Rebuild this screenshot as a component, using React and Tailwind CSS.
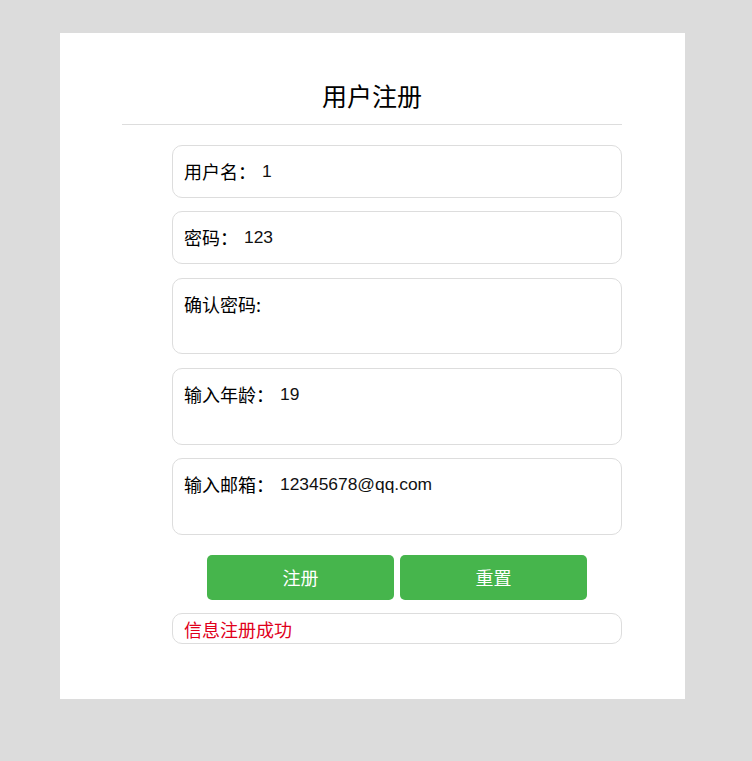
import React from 'react';

const cjk = '"Noto Sans CJK SC", "Liberation Sans", sans-serif';
const latin = '"Liberation Sans", "Noto Sans CJK SC", sans-serif';

const Field = ({ label, value, className }) => (
    <div className={`flex items-start border border-[#dddddd] rounded-[10px] pl-[11px] pt-[15px] ${className}`}>
        <span className="text-[18px] leading-[20px] text-black" style={{ fontFamily: cjk }}>{label}</span>
        {value && (
            <span className="ml-[6px] text-[17.4px] leading-[20px] text-[#111]" style={{ fontFamily: latin }}>{value}</span>
        )}
    </div>
);

const App = () => {
    return (
        <div className="min-h-screen bg-[#dcdcdc] pt-[33px]">
            <div className="ml-[60px] w-[625px] h-[666px] bg-white pl-[62px] pr-[63px] flex flex-col">
                {/* Header */}
                <h1 className="mt-[49px] h-[26px] leading-[26px] text-center text-[25px] text-black" style={{ fontFamily: cjk }}>
                    用户注册
                </h1>
                <div className="mt-[16px] h-px bg-[#dddddd]" />

                {/* Form */}
                <div className="ml-[50px] w-[450px] flex flex-col">
                    <Field label="用户名：" value="1" className="mt-[20px] h-[53px]" />
                    <Field label="密码：" value="123" className="mt-[13px] h-[53px]" />
                    <Field label="确认密码:" className="mt-[14px] h-[76px]" />
                    <Field label="输入年龄：" value="19" className="mt-[14px] h-[77px]" />
                    <Field label="输入邮箱：" value="12345678@qq.com" className="mt-[13px] h-[77px]" />

                    <div className="mt-[20px] flex justify-center gap-[6px]">
                        <button className="w-[187px] h-[45px] rounded-[5px] bg-[#46b54c] text-white text-[18px]" style={{ fontFamily: cjk }}>
                            注册
                        </button>
                        <button className="w-[187px] h-[45px] rounded-[5px] bg-[#46b54c] text-white text-[18px]" style={{ fontFamily: cjk }}>
                            重置
                        </button>
                    </div>

                    <div className="mt-[13px] h-[31px] border border-[#dddddd] rounded-[10px] pl-[11px] flex items-center">
                        <span className="text-[18px] leading-[20px] text-[#e0001b]" style={{ fontFamily: cjk }}>信息注册成功</span>
                    </div>
                </div>
            </div>
        </div>
    );
};

export default App;
